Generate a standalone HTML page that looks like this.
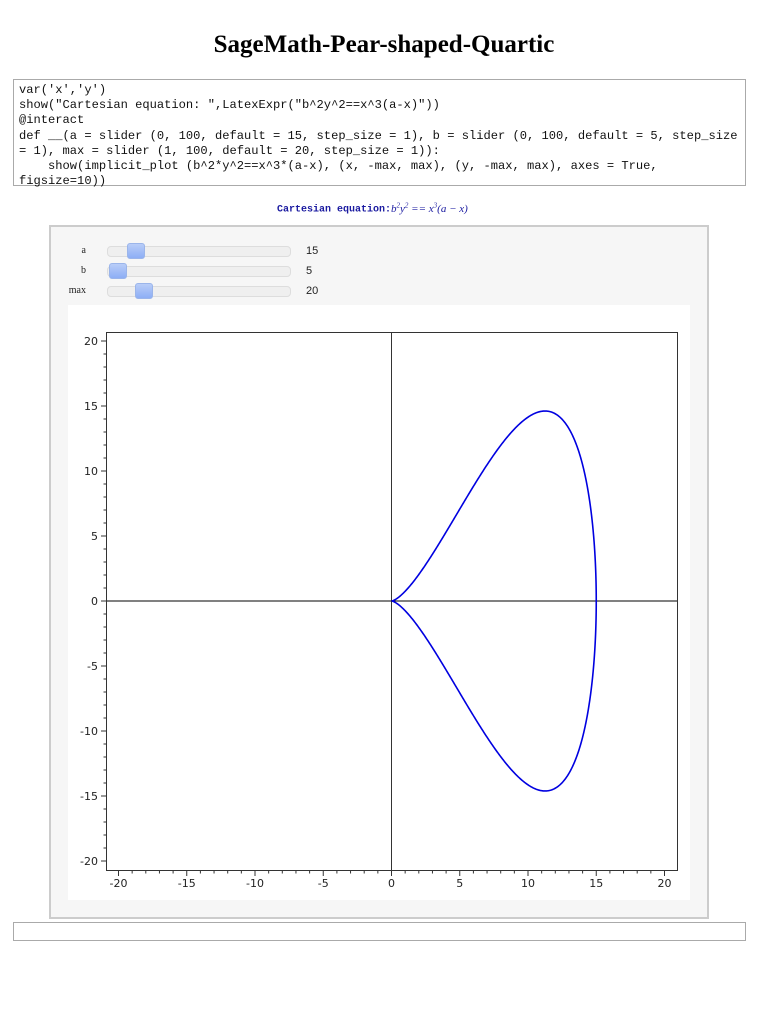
<!DOCTYPE html>
<html><head><meta charset="utf-8">
<style>
body{margin:0;background:#fff;width:768px;height:1024px;position:relative;overflow:hidden}
h1{position:absolute;top:31px;left:0;width:768px;text-align:center;margin:0;font:bold 25px "Liberation Serif",serif;color:#000}
.code{position:absolute;left:13px;top:79px;width:733px;height:107px;border:1px solid #aaa;box-sizing:border-box;padding:3px 0 0 5px;font:12.1px/15.2px "Liberation Mono",monospace;color:#111;white-space:pre}
.eq{position:absolute;left:277px;top:201px;font:10px "Liberation Mono",monospace;color:#1a1aa0;font-weight:bold}
.eq i{font-family:"Liberation Serif",serif;font-weight:normal;font-size:11px}
.panel{position:absolute;left:49px;top:225px;width:660px;height:694px;border:2px solid #ccc;box-sizing:border-box;background:#f6f6f6}
.lbl{position:absolute;font:10px "Liberation Serif",serif;color:#222;text-align:right;width:40px}
.val{position:absolute;font:11px "Liberation Sans",sans-serif;color:#222}
.track{position:absolute;left:107px;width:182px;height:9px;border:1px solid #ddd;border-radius:4px;background:#efefef}
.knob{position:absolute;width:16px;height:14px;border-radius:3px;background:linear-gradient(#b9cdf8,#8daef5);border:1px solid #9bb5ea;top:-4px}
.bottom{position:absolute;left:13px;top:922px;width:733px;height:19px;border:1px solid #aaa;box-sizing:border-box}
svg{position:absolute;left:0;top:0}
</style></head><body>
<h1>SageMath-Pear-shaped-Quartic</h1>
<div class="code">var('x','y')
show("Cartesian equation: ",LatexExpr("b^2y^2==x^3(a-x)"))
@interact
def __(a = slider (0, 100, default = 15, step_size = 1), b = slider (0, 100, default = 5, step_size
= 1), max = slider (1, 100, default = 20, step_size = 1)):
    show(implicit_plot (b^2*y^2==x^3*(a-x), (x, -max, max), (y, -max, max), axes = True,
figsize=10))</div>
<div class="eq">Cartesian equation:<i>b<sup style="font-size:7px">2</sup>y<sup style="font-size:7px">2</sup> == x<sup style="font-size:7px">3</sup>(a − x)</i></div>
<div class="panel"></div>
<div class="lbl" style="left:46px;top:245px">a</div>
<div class="lbl" style="left:46px;top:265px">b</div>
<div class="lbl" style="left:46px;top:285px">max</div>
<div class="track" style="top:246px"><div class="knob" style="left:19px"></div></div>
<div class="track" style="top:266px"><div class="knob" style="left:1px"></div></div>
<div class="track" style="top:286px"><div class="knob" style="left:27px"></div></div>
<div class="val" style="left:306px;top:245px">15</div>
<div class="val" style="left:306px;top:265px">5</div>
<div class="val" style="left:306px;top:285px">20</div>
<div style="position:absolute;left:68px;top:305px;width:622px;height:595px;background:#fff"></div>
<div class="bottom"></div>
<svg id="s" width="768" height="1024" xmlns="http://www.w3.org/2000/svg"></svg>
<script>
var s=document.getElementById('s'),h='';
var X=function(x){return 391.5+x*13.65},Y=function(y){return 601-y*13.0};
h+='<rect x="106.5" y="332.5" width="571" height="538" fill="none" stroke="#333" stroke-width="1"/>';
h+='<line x1="'+X(0)+'" y1="333" x2="'+X(0)+'" y2="870" stroke="#000" stroke-width="0.8"/>';
h+='<line x1="107" y1="601" x2="677" y2="601" stroke="#000" stroke-width="1"/>';
for(var i=-20;i<=20;i++){
 var big=i%5==0,L=big?5:2.5;
 h+='<line x1="'+X(i)+'" y1="871" x2="'+X(i)+'" y2="'+(871+L)+'" stroke="#333"/>';
 h+='<line x1="106" y1="'+Y(i)+'" x2="'+(106-L)+'" y2="'+Y(i)+'" stroke="#333"/>';
 if(big){
  h+='<text x="'+X(i)+'" y="887" font-family="DejaVu Sans,sans-serif" font-size="11" text-anchor="middle" fill="#222">'+i+'</text>';
  h+='<text x="98" y="'+(Y(i)+4)+'" font-family="DejaVu Sans,sans-serif" font-size="11" text-anchor="end" fill="#222">'+i+'</text>';
 }
}
var up=[],dn=[];
for(var k=0;k<=400;k++){var t=k/400,x=15*(1-Math.pow(1-t,1.6));var v=Math.max(0,x*x*x*(15-x));var y=Math.sqrt(v)/5;up.push(X(x).toFixed(2)+','+Y(y).toFixed(2));dn.push(X(x).toFixed(2)+','+Y(-y).toFixed(2));}
h+='<path d="M'+up.join(' L')+' L'+dn.reverse().join(' L')+'" fill="none" stroke="#0000e0" stroke-width="1.6"/>';
s.innerHTML=h;
</script>
</body></html>
